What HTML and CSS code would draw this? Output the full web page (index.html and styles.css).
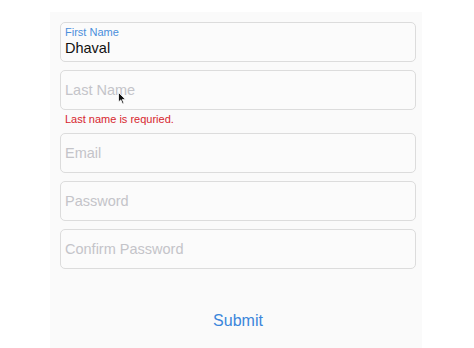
FILE: index.html
```html
<!DOCTYPE html>
<html>
<head>
<meta charset="utf-8">
<link rel="stylesheet" href="styles.css">
</head>
<body>
<div class="panel">
  <div class="field filled">
    <div class="label">First Name</div>
    <div class="value">Dhaval</div>
  </div>
  <div class="field cursor-host">
    <div class="placeholder">Last Name</div>
    <svg class="cursor" width="9" height="13" viewBox="0 0 9 13"><path d="M0.5 0.5 L0.5 10 L2.8 7.9 L4.6 12 L6 11.4 L4.3 7.4 L7.5 7.4 Z" fill="#111" stroke="#fff" stroke-width="0.8"/></svg>
  </div>
  <div class="error">Last name is requried.</div>
  <div class="field">
    <div class="placeholder">Email</div>
  </div>
  <div class="field">
    <div class="placeholder">Password</div>
  </div>
  <div class="field">
    <div class="placeholder">Confirm Password</div>
  </div>
  <div class="submit">Submit</div>
</div>
</body>
</html>
```
FILE: styles.css
```css
html, body {
  margin: 0;
  padding: 0;
  background: #ffffff;
  font-family: "Liberation Sans", Arial, sans-serif;
}
.panel {
  margin: 12px 0 0 50px;
  width: 356px;
  height: 326px;
  padding: 10px 6px 0 10px;
  background: #fafafa;
  display: flex;
  flex-direction: column;
}
.field {
  box-sizing: border-box;
  height: 40px;
  border: 1px solid #dcdcdc;
  border-radius: 5px;
  background: #fbfbfb;
  padding: 0 4px;
  display: flex;
  flex-direction: column;
  justify-content: center;
  margin-bottom: 8px;
  position: relative;
}
.field.filled {
  justify-content: flex-start;
  padding-top: 3px;
}
.label {
  font-size: 11px;
  line-height: 13px;
  color: #4a8fdc;
}
.value {
  font-size: 14.5px;
  line-height: 18px;
  color: #111111;
}
.placeholder {
  font-size: 14.5px;
  line-height: 18px;
  color: #c4c4c9;
}
.error {
  font-size: 11px;
  line-height: 15px;
  color: #d7262e;
  margin: -6px 0 6px 5px;
}
.submit {
  margin-top: 34px;
  text-align: center;
  font-size: 16px;
  line-height: 20px;
  color: #3b86db;
}
.cursor {
  position: absolute;
  left: 57px;
  top: 21px;
}
```
